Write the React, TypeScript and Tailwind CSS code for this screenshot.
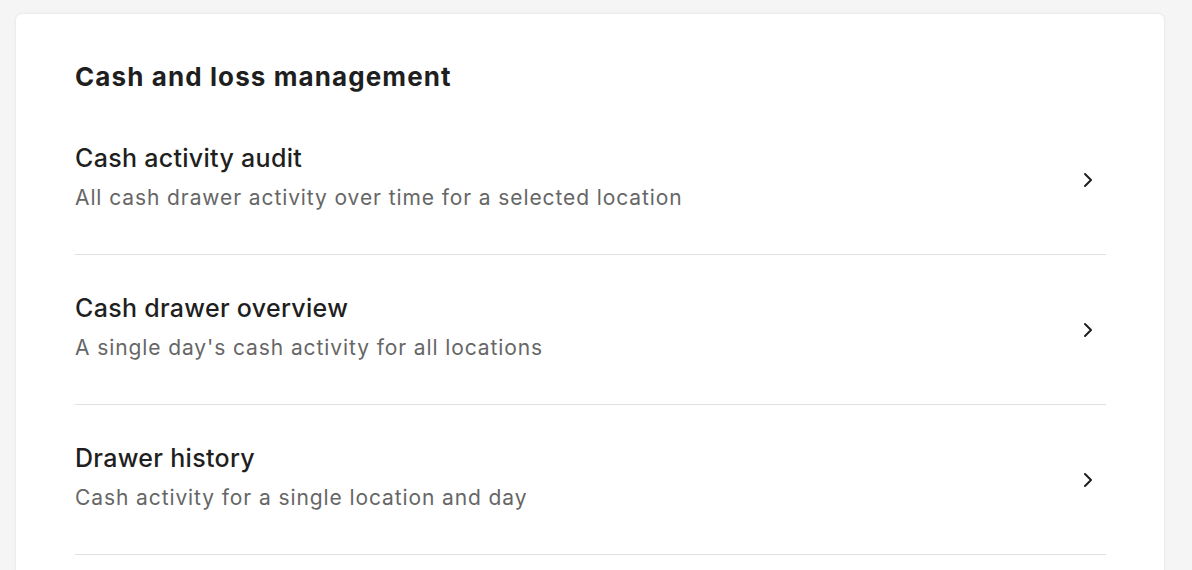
import React from "react";

const items = [
  {
    title: "Cash activity audit",
    desc: "All cash drawer activity over time for a selected location",
  },
  {
    title: "Cash drawer overview",
    desc: "A single day's cash activity for all locations",
  },
  {
    title: "Drawer history",
    desc: "Cash activity for a single location and day",
  },
];

function Chevron() {
  return (
    <svg width="10" height="16" viewBox="0 0 10 16" fill="none" className="shrink-0">
      <path
        d="M2 2 L8 8 L2 14"
        stroke="#1f1f1f"
        strokeWidth="2"
        strokeLinecap="round"
        strokeLinejoin="round"
      />
    </svg>
  );
}

export default function App() {
  return (
    <div
      className="min-h-screen bg-[#f5f5f5] pt-[14px] pl-4 pr-[28px]"
      style={{ fontFamily: "Inter, 'Noto Sans', sans-serif" }}
    >
      <div className="bg-white rounded-md shadow-[0_0_3px_rgba(0,0,0,0.1)] pt-[47px] pl-[59px] pr-[58px] pb-10">
        <h2 className="text-[26px] leading-[32px] font-bold tracking-[1.1px] text-[#1f1f1f] mb-[12px]">
          Cash and loss management
        </h2>
        <div className="flex flex-col">
          {items.map((item, i) => (
            <div
              key={i}
              className="h-[150px] flex justify-between border-b border-[#e0e0e0] pr-[13px] pt-[37px]"
            >
              <div className="flex flex-col gap-[10px]">
                <p className="text-[25px] leading-[32px] font-medium tracking-[0.3px] text-[#1f1f1f]">
                  {item.title}
                </p>
                <p className="text-[21px] leading-[28px] tracking-[0.9px] text-[#666666]">
                  {item.desc}
                </p>
              </div>
              <div className="self-center -mt-[36px] flex">
                <Chevron />
              </div>
            </div>
          ))}
        </div>
      </div>
    </div>
  );
}
